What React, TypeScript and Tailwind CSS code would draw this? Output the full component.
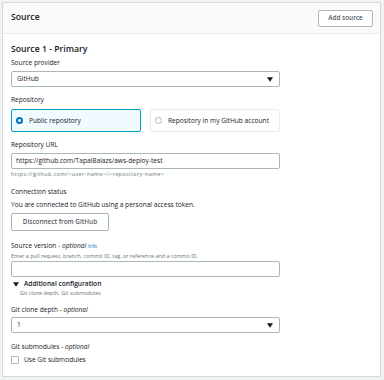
import React from "react";

const Caret = () => (
  <svg width="6" height="5" viewBox="0 0 8 6" className="shrink-0">
    <path d="M0 0 L8 0 L4 6 Z" fill="#16191f" />
  </svg>
);

const label = "text-[6.6px] leading-[10px]";
const hint = "text-[5.4px] leading-[8px] text-[#687078]";

export default function App() {
  return (
    <div
      className="w-[384px] h-[380px] bg-[#f2f3f3] p-[2px] text-[#16191f]"
      style={{ fontFamily: '"Open Sans", "Liberation Sans", sans-serif' }}
    >
      <div className="w-[379px] h-[375px] bg-white border border-[#d5dbdb] flex flex-col">
        <div className="h-[31px] bg-[#fafafa] border-b border-[#eaeded] flex items-center justify-between pl-[8px] pr-[7px]">
          <div className="text-[8.7px] font-semibold">Source</div>
          <div className="h-[17px] w-[55px] border border-[#aab7b8] rounded-[2px] bg-white flex items-center justify-center text-[6.4px] font-semibold text-[#545b64] whitespace-nowrap">
            Add source
          </div>
        </div>
        <div className="pl-[8px] pt-[8px] flex flex-col">
          <div className="text-[8.7px] font-semibold leading-[14px]">Source 1 - Primary</div>
          <div className={`${label} mt-[2px]`}>Source provider</div>
          <div className="mt-[3px] w-[269px] h-[16px] border border-[#aab7b8] rounded-[2px] flex items-center justify-between pl-[5px] pr-[6px] text-[6.6px]">
            <span>GitHub</span>
            <Caret />
          </div>
          <div className={`${label} mt-[8px]`}>Repository</div>
          <div className="mt-[4px] flex gap-[9px]">
            <div className="w-[130px] h-[23px] border border-[#00a1c9] bg-[#f1faff] rounded-[2px] flex items-center pl-[4px] gap-[6px] text-[6.6px] whitespace-nowrap">
              <span className="w-[7px] h-[7px] rounded-full border-[2px] border-[#0073bb] bg-white shrink-0" />
              <span>Public repository</span>
            </div>
            <div className="w-[130px] h-[23px] border border-[#eaeded] rounded-[2px] flex items-center pl-[4px] gap-[6px] text-[6.6px] whitespace-nowrap">
              <span className="w-[7px] h-[7px] rounded-full border border-[#aab7b8] bg-white shrink-0" />
              <span>Repository in my GitHub account</span>
            </div>
          </div>
          <div className={`${label} mt-[8px]`}>Repository URL</div>
          <div className="mt-[3px] w-[269px] h-[16px] border border-[#aab7b8] rounded-[2px] flex items-center px-[4px] text-[6.6px]">
            https://github.com/TapaiBalazs/aws-deploy-test
          </div>
          <div className={`${hint} mt-[1px] tracking-[0.45px]`}>
            https://github.com/&lt;user-name&gt;/&lt;repository-name&gt;
          </div>
          <div className={`${label} mt-[9px]`}>Connection status</div>
          <div className={`${label} mt-[3px]`}>You are connected to GitHub using a personal access token.</div>
          <div className="mt-[3px] w-[98px] h-[18px] border border-[#aab7b8] rounded-[2px] flex items-center justify-center text-[6.4px] font-semibold text-[#545b64] whitespace-nowrap">
            Disconnect from GitHub
          </div>
          <div className={`${label} mt-[10px] whitespace-nowrap`}>
            Source version - <i>optional</i> <span className="text-[5px] text-[#0073bb]">Info</span>
          </div>
          <div className={`${hint} mt-[1px]`}>
            Enter a pull request, branch, commit ID, tag, or reference and a commit ID.
          </div>
          <div className="mt-[1px] w-[269px] h-[16px] border border-[#aab7b8] rounded-[2px]" />
          <div className="mt-[2px] flex items-center gap-[5px] text-[6.6px] font-semibold leading-[10px] pl-[2px]">
            <Caret />
            <span>Additional configuration</span>
          </div>
          <div className={`${hint} pl-[9px]`}>Git clone depth, Git submodules</div>
          <div className={`${label} mt-[8px]`}>
            Git clone depth - <i>optional</i>
          </div>
          <div className="mt-[2px] w-[269px] h-[16px] border border-[#aab7b8] rounded-[2px] flex items-center justify-between pl-[5px] pr-[6px] text-[6.6px]">
            <span>1</span>
            <Caret />
          </div>
          <div className={`${label} mt-[9px]`}>
            Git submodules - <i>optional</i>
          </div>
          <div className={`mt-[3px] flex items-center gap-[5px] ${label}`}>
            <span className="w-[8px] h-[8px] border border-[#aab7b8] rounded-[1px] shrink-0" />
            <span>Use Git submodules</span>
          </div>
        </div>
      </div>
    </div>
  );
}
